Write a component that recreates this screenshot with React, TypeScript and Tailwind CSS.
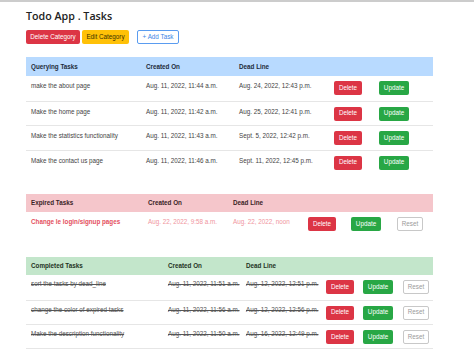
import React from 'react';

type Row = { title: string; created: string; deadline: string };

const querying: Row[] = [
  { title: 'make the about page', created: 'Aug. 11, 2022, 11:44 a.m.', deadline: 'Aug. 24, 2022, 12:43 p.m.' },
  { title: 'Make the home page', created: 'Aug. 11, 2022, 11:42 a.m.', deadline: 'Aug. 25, 2022, 12:41 p.m.' },
  { title: 'Make the statistics functionality', created: 'Aug. 11, 2022, 11:43 a.m.', deadline: 'Sept. 5, 2022, 12:42 p.m.' },
  { title: 'Make the contact us page', created: 'Aug. 11, 2022, 11:46 a.m.', deadline: 'Sept. 11, 2022, 12:45 p.m.' },
];

const completed: Row[] = [
  { title: 'sort the tasks by dead_line', created: 'Aug. 11, 2022, 11:51 a.m.', deadline: 'Aug. 12, 2022, 12:51 p.m.' },
  { title: 'change the color of expired tasks', created: 'Aug. 11, 2022, 11:56 a.m.', deadline: 'Aug. 12, 2022, 12:56 p.m.' },
  { title: 'Make the description functionality', created: 'Aug. 11, 2022, 11:50 a.m.', deadline: 'Aug. 16, 2022, 12:49 p.m.' },
];

const DeleteBtn = () => (
  <button className="h-[14px] w-[28px] rounded-[2px] bg-[#dc3545] text-[6.3px] leading-none text-white">Delete</button>
);
const UpdateBtn = () => (
  <button className="h-[14px] w-[30px] rounded-[2px] bg-[#28a745] text-[6.3px] leading-none text-white">Update</button>
);
const ResetBtn = () => (
  <button className="h-[14px] w-[26px] rounded-[2px] border border-[#c8c8c8] bg-white text-[6.3px] leading-none text-[#9a9a9a]">Reset</button>
);

export default function App() {
  return (
    <div className="min-h-screen bg-white font-['Liberation_Sans',Arial,sans-serif] text-[#212529]">
      <div className="h-[2px] bg-[#cccccc]" />
      <div className="w-[407px] ml-[26px] pt-[6px]">
        <h1 className="font-['Open_Sans',sans-serif] text-[10.7px] leading-[16px] font-semibold text-[#222]">Todo App . Tasks</h1>

        <div className="mt-[6px] flex whitespace-nowrap">
          <button className="h-[14px] w-[54px] rounded-[2px] bg-[#dc3545] text-[6.3px] leading-none text-white">Delete Category</button>
          <button className="ml-[2px] h-[14px] w-[47px] rounded-[2px] bg-[#ffc107] text-[6.3px] leading-none text-[#3a3000]">Edit Category</button>
          <button className="ml-[8px] h-[14px] w-[42px] rounded-[2px] border border-[#5a9cf0] bg-white text-[6.3px] leading-none text-[#3d86e6]">+ Add Task</button>
        </div>

        {/* Querying */}
        <div className="mt-[13px] whitespace-nowrap">
          <div className="grid h-[19px] grid-cols-[115px_93px_95px_45px_59px] items-center bg-[#b8daff] text-[6.3px] font-bold text-[#1d2b3a]">
            <div className="pl-[5px]">Querying Tasks</div>
            <div className="pl-[5px]">Created On</div>
            <div className="pl-[5px]">Dead Line</div>
            <div />
            <div />
          </div>
          {querying.map((r, i) => (
            <div
              key={r.title}
              className={`grid h-[24.5px] grid-cols-[115px_93px_95px_45px_59px] text-[6.3px] leading-[8px] text-[#444] ${i > 0 ? 'border-t border-[#e6e6e6]' : ''}`}
            >
              <div className="pl-[5px] pt-[6px]">{r.title}</div>
              <div className="pl-[5px] pt-[6px]">{r.created}</div>
              <div className="pl-[5px] pt-[6px]">{r.deadline}</div>
              <div className="pl-[5px] pt-[5px]"><DeleteBtn /></div>
              <div className="pl-[5px] pt-[5px]"><UpdateBtn /></div>
            </div>
          ))}
        </div>

        {/* Expired */}
        <div className="mt-[20px] whitespace-nowrap">
          <div className="grid h-[18px] grid-cols-[117px_85px_75px_43px_46px_41px] items-center bg-[#f5c6cb] text-[6.3px] font-bold text-[#3a2326]">
            <div className="pl-[5px]">Expired Tasks</div>
            <div className="pl-[5px]">Created On</div>
            <div className="pl-[5px]">Dead Line</div>
            <div />
            <div />
            <div />
          </div>
          <div className="grid h-[24px] grid-cols-[117px_85px_75px_43px_46px_41px] text-[6.3px] leading-[8px]">
            <div className="pl-[5px] pt-[6px] font-bold text-[#e4505e]">Change le login/signup pages</div>
            <div className="pl-[5px] pt-[6px] text-[#f0959e]">Aug. 22, 2022, 9:58 a.m.</div>
            <div className="pl-[5px] pt-[6px] text-[#f0959e]">Aug. 22, 2022, noon</div>
            <div className="pl-[5px] pt-[5px]"><DeleteBtn /></div>
            <div className="pl-[5px] pt-[5px]"><UpdateBtn /></div>
            <div className="pl-[5px] pt-[5px]"><ResetBtn /></div>
          </div>
        </div>

        {/* Completed */}
        <div className="mt-[21px] whitespace-nowrap">
          <div className="grid h-[18px] grid-cols-[137px_78px_80px_37px_40px_35px] items-center bg-[#c3e6cb] text-[6.3px] font-bold text-[#1f3324]">
            <div className="pl-[5px]">Completed Tasks</div>
            <div className="pl-[5px]">Created On</div>
            <div className="pl-[5px]">Dead Line</div>
            <div />
            <div />
            <div />
          </div>
          {completed.map((r, i) => (
            <div
              key={r.title}
              className={`grid h-[24.5px] grid-cols-[137px_78px_80px_37px_40px_35px] text-[6.3px] leading-[8px] text-[#555] ${i > 0 ? 'border-t border-[#e6e6e6]' : ''} ${i === completed.length - 1 ? 'border-b border-[#e6e6e6]' : ''}`}
            >
              <div className="pl-[5px] pt-[5px] line-through">{r.title}</div>
              <div className="pl-[5px] pt-[5px] line-through">{r.created}</div>
              <div className="pl-[5px] pt-[5px] line-through">{r.deadline}</div>
              <div className="pl-[5px] pt-[5px]"><DeleteBtn /></div>
              <div className="pl-[5px] pt-[5px]"><UpdateBtn /></div>
              <div className="pl-[5px] pt-[5px]"><ResetBtn /></div>
            </div>
          ))}
        </div>
      </div>
    </div>
  );
}
